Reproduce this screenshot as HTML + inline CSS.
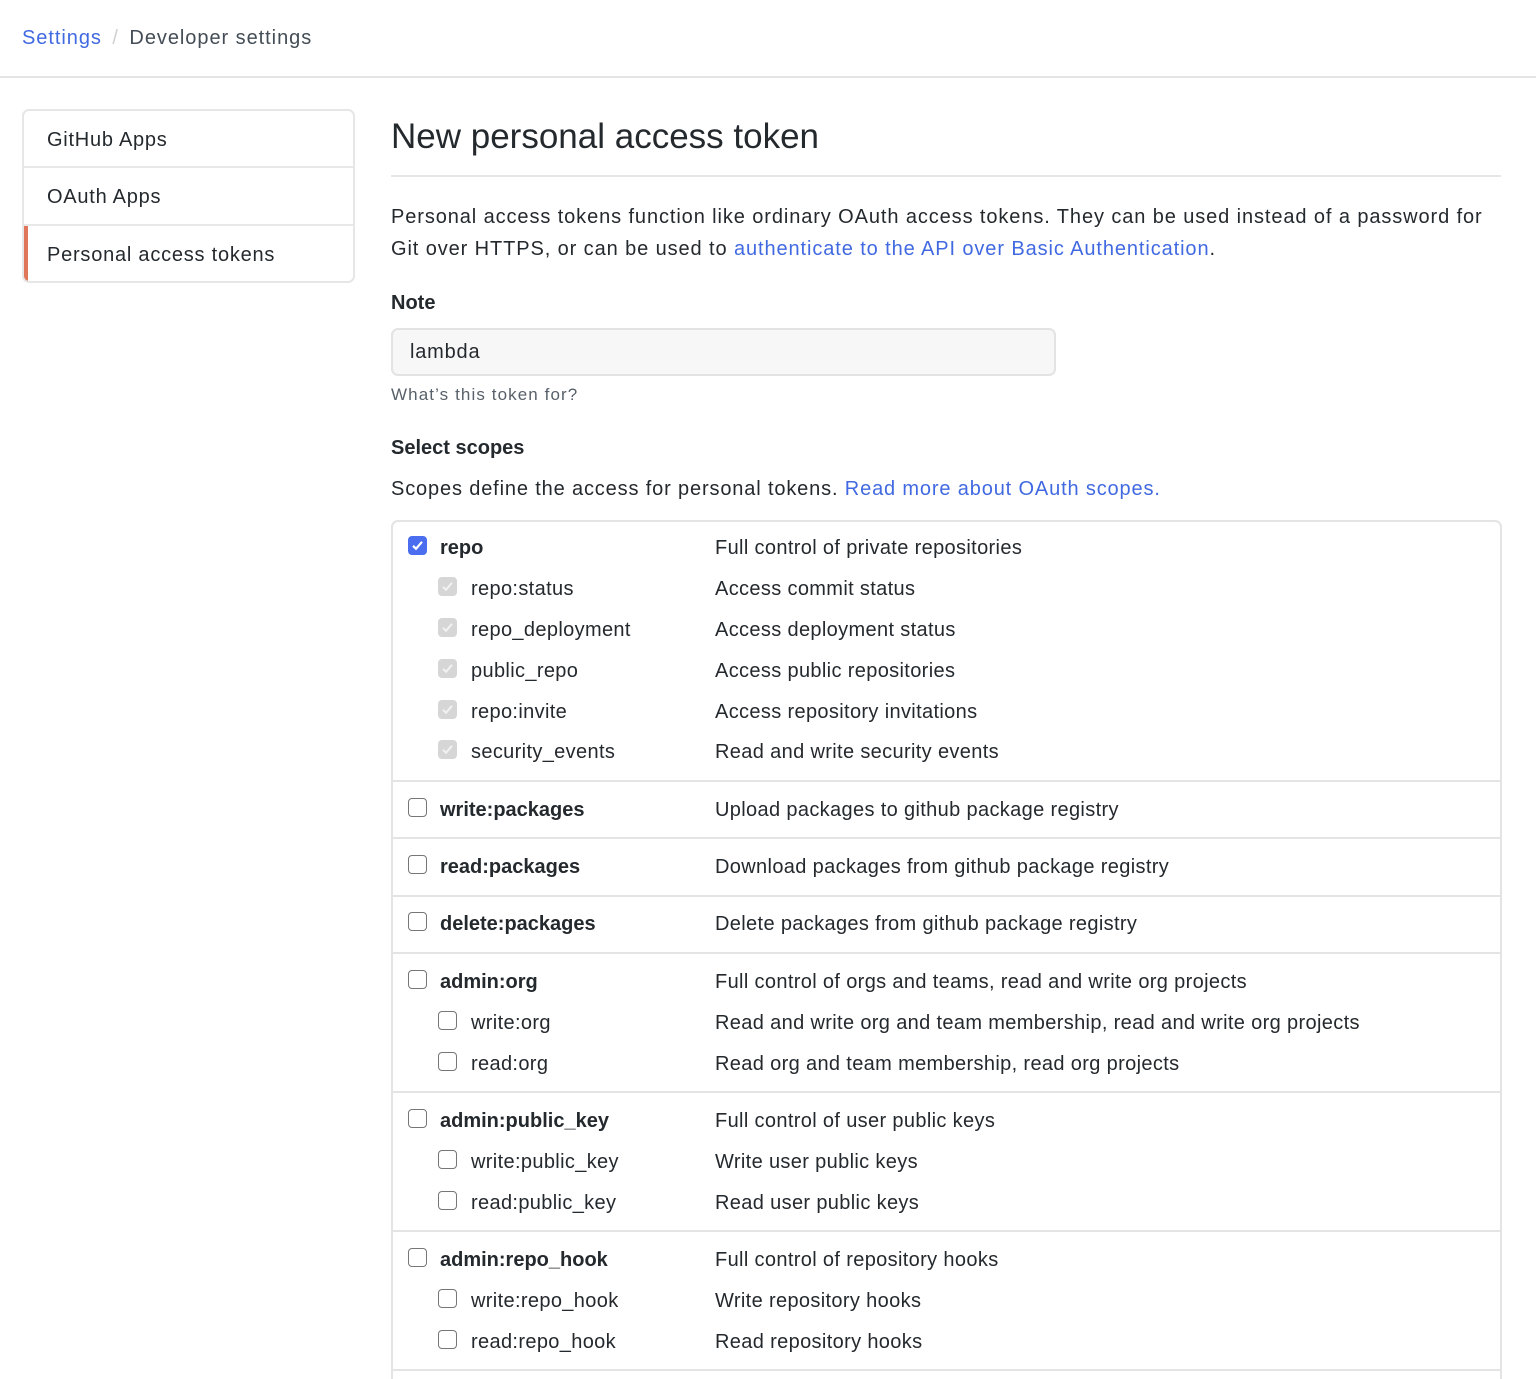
<!DOCTYPE html>
<html><head><meta charset="utf-8"><style>
*{margin:0;padding:0;box-sizing:border-box}
html,body{width:1536px;height:1379px;overflow:hidden}
body{background:#fff;font-family:"Liberation Sans",sans-serif;color:#24292e;position:relative;font-size:20px}
.a{position:absolute;white-space:nowrap}
.lnk{color:#4169e1}
.t{position:absolute;height:32px;line-height:32px;white-space:nowrap;letter-spacing:0.35px}
.b{font-weight:bold;letter-spacing:0}
.cb{position:absolute;width:19px;height:19px;border:1.5px solid #767676;border-radius:4px;background:#fff}
.cb.on{background:#4b6ef0;border-color:#4b6ef0}
.cb.dis{background:#d6d6d6;border-color:#d6d6d6}
.cb svg{position:absolute;left:2px;top:2px}
.sep{position:absolute;left:392px;width:1108px;height:2px;background:#e4e4e4}
</style></head><body>
<div class="a" style="left:22px;top:24px;line-height:28px;letter-spacing:0.95px"><span class="lnk">Settings</span> <span style="color:#d0d0d0;margin:0 4px">/</span> <span style="color:#444d56">Developer settings</span></div>
<div style="position:absolute;left:0;top:76px;width:1536px;height:2px;background:#e4e4e4"></div>

<div style="position:absolute;left:22px;top:109px;width:333px;height:174px;border:2px solid #e6e6e6;border-radius:7px;overflow:hidden">
 <div class="t" style="left:23px;top:13px;letter-spacing:0.75px">GitHub Apps</div>
 <div style="position:absolute;left:0;top:55px;width:100%;height:2px;background:#e8e8e8"></div>
 <div class="t" style="left:23px;top:70px;letter-spacing:0.75px">OAuth Apps</div>
 <div style="position:absolute;left:0;top:113px;width:100%;height:2px;background:#e8e8e8"></div>
 <div style="position:absolute;left:0;top:115px;width:4px;height:60px;background:#e0775a"></div>
 <div class="t" style="left:23px;top:128px;letter-spacing:0.77px">Personal access tokens</div>
</div>

<div class="a" style="left:391px;top:115px;font-size:35px;line-height:44px">New personal access token</div>
<div style="position:absolute;left:391px;top:175px;width:1110px;height:2px;background:#e6e6e6"></div>
<div class="a" style="left:391px;top:201px;line-height:32px;letter-spacing:0.9px">Personal access tokens function like ordinary OAuth access tokens. They can be used instead of a password for<br>Git over HTTPS, or can be used to <span class="lnk">authenticate to the API over Basic Authentication</span>.</div>
<div class="t b" style="left:391px;top:287px">Note</div>
<div style="position:absolute;left:391px;top:328px;width:665px;height:48px;border:2px solid #e3e3e3;border-radius:7px;background:#f7f7f7"></div>
<div class="t" style="left:410px;top:336px;letter-spacing:0.8px">lambda</div>
<div class="t" style="left:391px;top:379px;font-size:17px;color:#586069;letter-spacing:1.1px">What’s this token for?</div>
<div class="t b" style="left:391px;top:432px">Select scopes</div>
<div class="t" style="left:391px;top:473px;letter-spacing:0.85px">Scopes define the access for personal tokens. <span class="lnk">Read more about OAuth scopes.</span></div>

<div style="position:absolute;left:391px;top:520px;width:1111px;height:900px;border:2px solid #e4e4e4;border-radius:7px"></div>

<div class="cb on" style="left:408px;top:536px"><svg width="13" height="13" viewBox="0 0 13 13"><path d="M2 6.8l3 3 6-7" stroke="#fff" stroke-width="2.2" fill="none"/></svg></div>
<div class="t b" style="left:440px;top:532px">repo</div><div class="t" style="left:715px;top:532px">Full control of private repositories</div>

<div class="cb dis" style="left:438px;top:577px"><svg width="13" height="13" viewBox="0 0 13 13"><path d="M2 6.8l3 3 6-7" stroke="#f2f2f2" stroke-width="2" fill="none"/></svg></div>
<div class="t" style="left:471px;top:573px">repo:status</div><div class="t" style="left:715px;top:573px">Access commit status</div>
<div class="cb dis" style="left:438px;top:618px"><svg width="13" height="13" viewBox="0 0 13 13"><path d="M2 6.8l3 3 6-7" stroke="#f2f2f2" stroke-width="2" fill="none"/></svg></div>
<div class="t" style="left:471px;top:614px">repo_deployment</div><div class="t" style="left:715px;top:614px">Access deployment status</div>
<div class="cb dis" style="left:438px;top:659px"><svg width="13" height="13" viewBox="0 0 13 13"><path d="M2 6.8l3 3 6-7" stroke="#f2f2f2" stroke-width="2" fill="none"/></svg></div>
<div class="t" style="left:471px;top:655px">public_repo</div><div class="t" style="left:715px;top:655px">Access public repositories</div>
<div class="cb dis" style="left:438px;top:700px"><svg width="13" height="13" viewBox="0 0 13 13"><path d="M2 6.8l3 3 6-7" stroke="#f2f2f2" stroke-width="2" fill="none"/></svg></div>
<div class="t" style="left:471px;top:696px">repo:invite</div><div class="t" style="left:715px;top:696px">Access repository invitations</div>
<div class="cb dis" style="left:438px;top:740px"><svg width="13" height="13" viewBox="0 0 13 13"><path d="M2 6.8l3 3 6-7" stroke="#f2f2f2" stroke-width="2" fill="none"/></svg></div>
<div class="t" style="left:471px;top:736px">security_events</div><div class="t" style="left:715px;top:736px">Read and write security events</div>
<div class="sep" style="top:780px"></div>

<div class="cb" style="left:408px;top:798px"></div>
<div class="t b" style="left:440px;top:794px">write:packages</div><div class="t" style="left:715px;top:794px">Upload packages to github package registry</div>
<div class="sep" style="top:837px"></div>
<div class="cb" style="left:408px;top:855px"></div>
<div class="t b" style="left:440px;top:851px">read:packages</div><div class="t" style="left:715px;top:851px">Download packages from github package registry</div>
<div class="sep" style="top:895px"></div>
<div class="cb" style="left:408px;top:912px"></div>
<div class="t b" style="left:440px;top:908px">delete:packages</div><div class="t" style="left:715px;top:908px">Delete packages from github package registry</div>
<div class="sep" style="top:952px"></div>

<div class="cb" style="left:408px;top:970px"></div>
<div class="t b" style="left:440px;top:966px">admin:org</div><div class="t" style="left:715px;top:966px">Full control of orgs and teams, read and write org projects</div>
<div class="cb" style="left:438px;top:1011px"></div>
<div class="t" style="left:471px;top:1007px">write:org</div><div class="t" style="left:715px;top:1007px">Read and write org and team membership, read and write org projects</div>
<div class="cb" style="left:438px;top:1052px"></div>
<div class="t" style="left:471px;top:1048px">read:org</div><div class="t" style="left:715px;top:1048px">Read org and team membership, read org projects</div>
<div class="sep" style="top:1091px"></div>

<div class="cb" style="left:408px;top:1109px"></div>
<div class="t b" style="left:440px;top:1105px">admin:public_key</div><div class="t" style="left:715px;top:1105px">Full control of user public keys</div>
<div class="cb" style="left:438px;top:1150px"></div>
<div class="t" style="left:471px;top:1146px">write:public_key</div><div class="t" style="left:715px;top:1146px">Write user public keys</div>
<div class="cb" style="left:438px;top:1191px"></div>
<div class="t" style="left:471px;top:1187px">read:public_key</div><div class="t" style="left:715px;top:1187px">Read user public keys</div>
<div class="sep" style="top:1230px"></div>

<div class="cb" style="left:408px;top:1248px"></div>
<div class="t b" style="left:440px;top:1244px">admin:repo_hook</div><div class="t" style="left:715px;top:1244px">Full control of repository hooks</div>
<div class="cb" style="left:438px;top:1289px"></div>
<div class="t" style="left:471px;top:1285px">write:repo_hook</div><div class="t" style="left:715px;top:1285px">Write repository hooks</div>
<div class="cb" style="left:438px;top:1330px"></div>
<div class="t" style="left:471px;top:1326px">read:repo_hook</div><div class="t" style="left:715px;top:1326px">Read repository hooks</div>
<div class="sep" style="top:1369px"></div>
</body></html>
